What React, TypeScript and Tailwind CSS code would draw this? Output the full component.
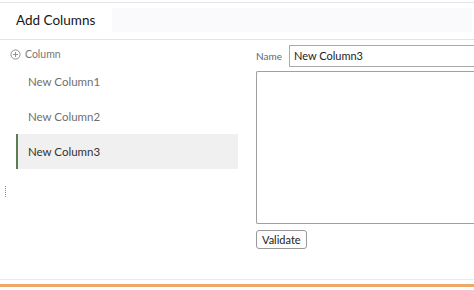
import React from 'react'

function App() {
  const items = ['New Column1', 'New Column2', 'New Column3']
  const selected = 2

  return (
    <div className="w-[474px] h-[290px] bg-white overflow-hidden flex flex-col" style={{ fontFamily: 'Lato, "Open Sans", sans-serif' }}>
      <div className="mt-[2px] border-t border-[#e6e6e8]" />
      <div className="flex items-center h-[37px] border-b border-[#e3e3e5]">
        <div className="w-[112px] pl-[16px] text-[13.5px] text-[#161616] leading-none">Add Columns</div>
        <div className="h-[24px] w-[360px] bg-[#fafafc] mb-[2px]" />
      </div>

      <div className="flex flex-1">
        <div className="w-[238px] flex flex-col">
          <div className="flex items-center gap-[4px] pl-[10px] mt-[8px] h-[13px] text-[10.5px] text-[#777]">
            <svg width="11" height="11" viewBox="0 0 12 12" fill="none" stroke="#888" strokeWidth="1">
              <circle cx="6" cy="6" r="5" />
              <path d="M6 3.3v5.4M3.3 6h5.4" />
            </svg>
            <span>Column</span>
          </div>
          <div className="mt-[3px] pl-[16px] flex flex-col">
            {items.map((it, i) => (
              <div
                key={it}
                className={
                  i === selected
                    ? 'h-[35px] flex items-center pl-[10px] text-[11.5px] text-[#333] bg-[#f0f0f0] border-l-2 border-[#5e7c52]'
                    : 'h-[35px] flex items-center pl-[12px] text-[11.5px] text-[#6f6f6f]'
                }
              >
                {it}
              </div>
            ))}
          </div>
          <div className="ml-[5px] mt-[17px] h-[11px] w-[1px] border-l border-dotted border-[#888]" />
        </div>

        <div className="flex-1 pl-[18px] pt-[5px] flex flex-col">
          <div className="flex items-center">
            <span className="text-[10px] text-[#666] w-[33px]">Name</span>
            <div className="h-[22px] flex-1 border border-[#aaa] border-r-0 flex items-center pl-[4px] text-[11px] text-[#222]">
              New Column3
            </div>
          </div>
          <div className="mt-[4px] h-[153px] border border-[#a0a0a0] border-r-0 rounded-l-[2px]" />
          <div className="mt-[6px] flex">
            <button className="h-[19px] px-[5px] text-[11px] text-[#222] border border-[#999] rounded-[3px] bg-[#fdfdfd] leading-none">
              Validate
            </button>
          </div>
        </div>
      </div>

      <div className="h-[1px] bg-[#e3ecf7] mb-[4px]" />
      <div className="h-[3px] bg-[#eea86a] mb-[3px]" />
    </div>
  )
}

export default App
